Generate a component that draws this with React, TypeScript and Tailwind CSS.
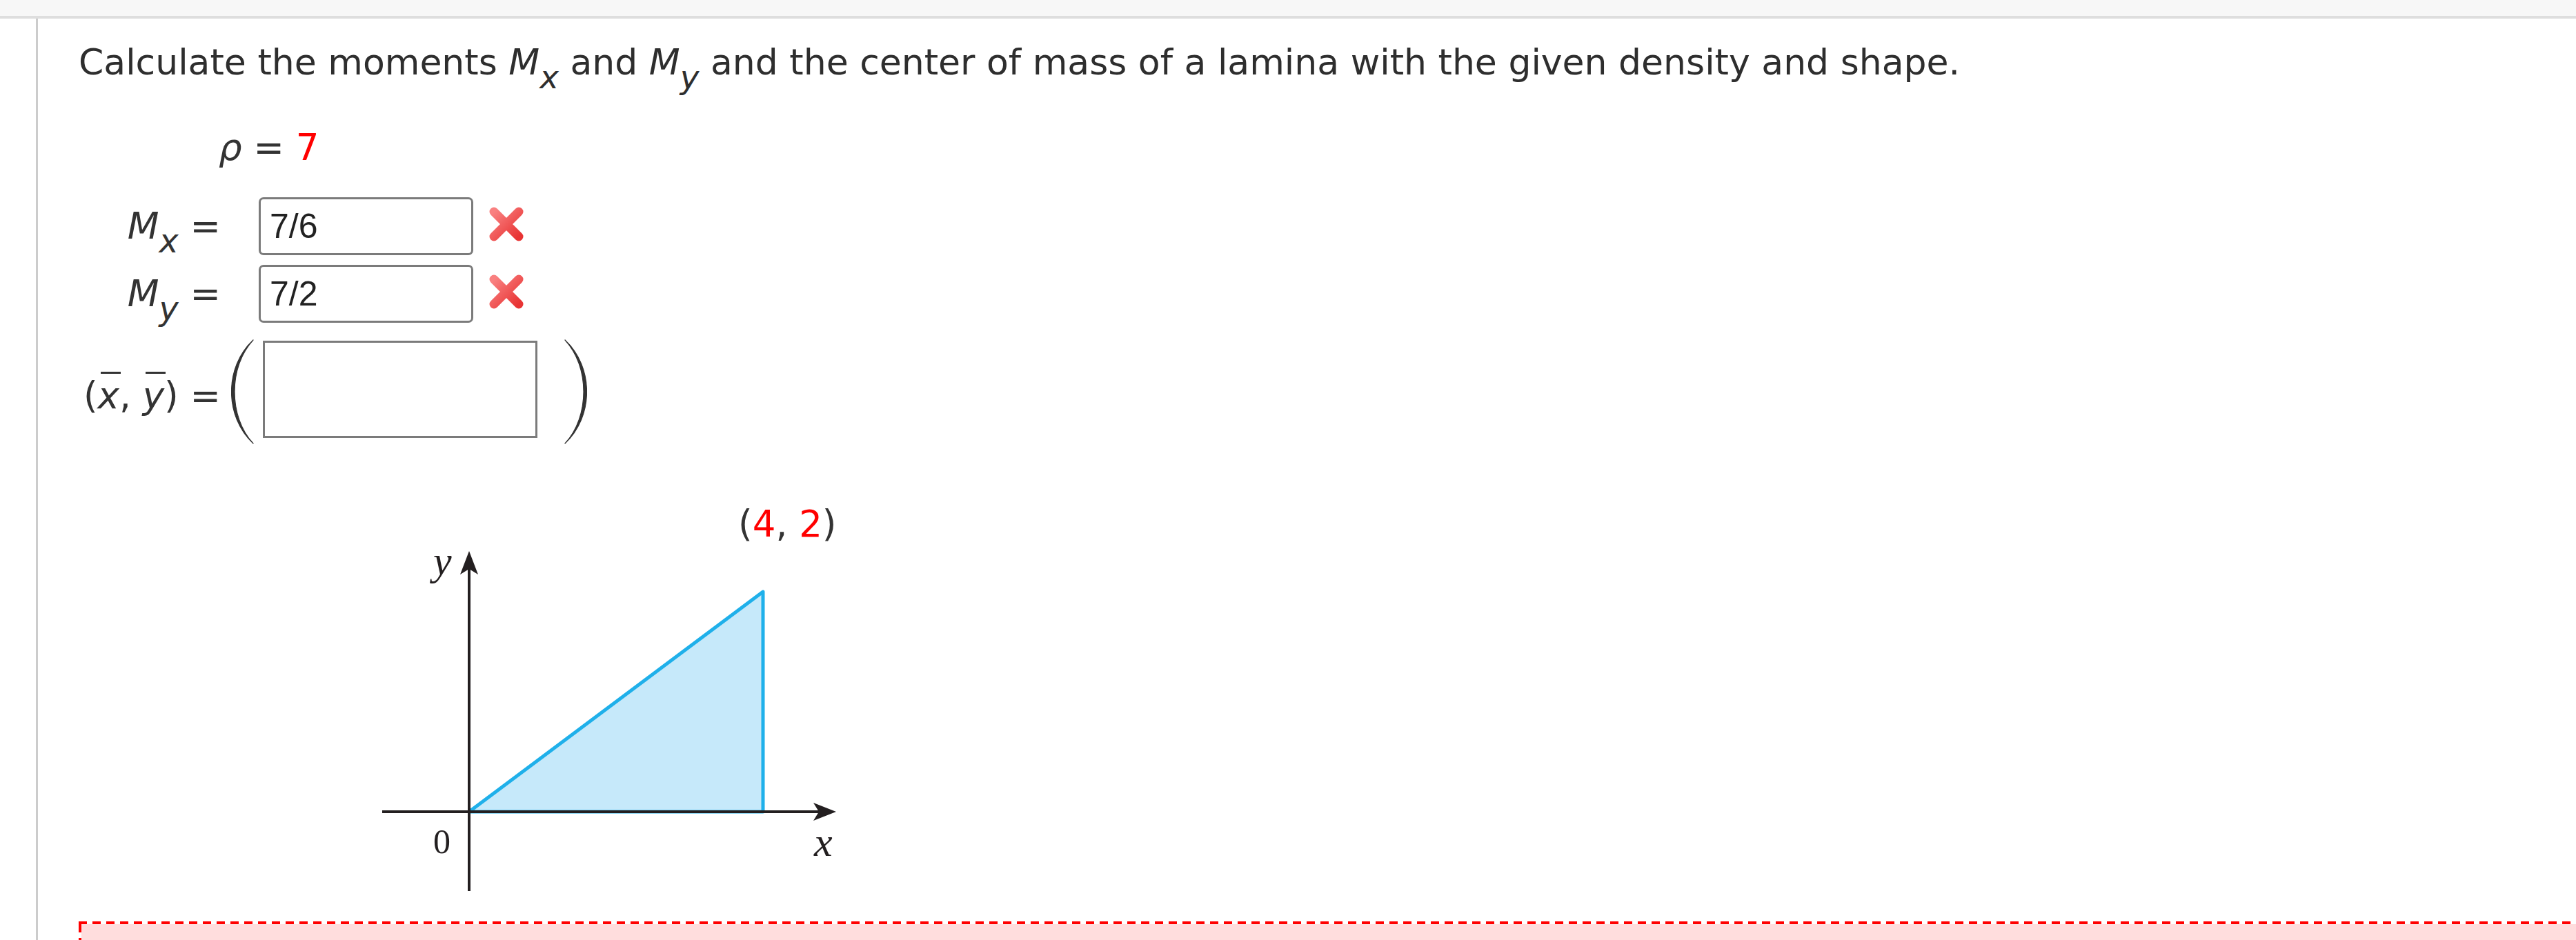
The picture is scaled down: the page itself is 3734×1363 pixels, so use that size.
import React from "react";

function Sub({ children }: { children: React.ReactNode }) {
  return <span className="relative top-[20px] text-[0.9em] italic">{children}</span>;
}

function XMark() {
  return (
    <svg width="54" height="54" viewBox="0 0 54 54" aria-hidden="true" className="ml-[21px] mt-[12px]">
      <defs>
        <linearGradient id="xmark" x1="0" y1="0" x2="1" y2="1">
          <stop offset="0" stopColor="#f98080" />
          <stop offset="1" stopColor="#e83434" />
        </linearGradient>
      </defs>
      <path d="M9 9 L45 45 M45 9 L9 45" stroke="url(#xmark)" strokeWidth="13" strokeLinecap="round" />
    </svg>
  );
}

function Paren({ side }: { side: "left" | "right" }) {
  const d =
    side === "left"
      ? "M32 1 C-10 40 -10 112 32 151 C-4 112 -4 40 32 1 Z"
      : "M2 1 C44 40 44 112 2 151 C38 112 38 40 2 1 Z";
  return (
    <svg width="34" height="152" viewBox="0 0 34 152" aria-hidden="true">
      <path d={d} fill="#333333" stroke="#333333" strokeWidth="1.2" strokeLinejoin="round" />
    </svg>
  );
}

function Bar({ children }: { children: React.ReactNode }) {
  return (
    <span className="relative italic">
      <span className="absolute left-[4px] right-[-2px] top-[-4px] h-[3px] bg-[#333333]" />
      {children}
    </span>
  );
}

function Lamina() {
  return (
    <svg width="700" height="530" viewBox="0 0 700 530" className="-mt-[20px] ml-[426px] block">
      <polygon points="140,405 566,405 566,86" fill="#c6e9fa" stroke="#1fb0ea" strokeWidth="5" strokeLinejoin="round" />
      <line x1="140" y1="44" x2="140" y2="520" stroke="#231f20" strokeWidth="4" />
      <line x1="14" y1="405" x2="655" y2="405" stroke="#231f20" strokeWidth="4" />
      <path d="M140 27 L153 61 L140 53 L127 61 Z" fill="#231f20" />
      <path d="M672 405 L639 392 L647 405 L639 418 Z" fill="#231f20" />
      <text x="88" y="61" fontFamily="Liberation Serif, serif" fontStyle="italic" fontSize="60" fill="#231f20">
        y
      </text>
      <text x="88" y="465" fontFamily="Liberation Serif, serif" fontSize="50" fill="#231f20">
        0
      </text>
      <text x="640" y="469" fontFamily="Liberation Serif, serif" fontStyle="italic" fontSize="60" fill="#231f20">
        x
      </text>
    </svg>
  );
}

const inputCls =
  "h-[84px] w-[311px] rounded-[7px] border-[3px] border-[#7b7b7b] bg-white px-[13px] font-['Liberation_Sans',Arial,sans-serif] text-[50px] text-[#222222] outline-none";

export default function App() {
  return (
    <div className="h-[1363px] w-full overflow-hidden bg-white font-['DejaVu_Sans',Verdana,sans-serif] text-[#333333]">
      <div className="h-[27px] border-b-4 border-[#dedede] bg-[#f7f7f7]" />
      <div className="ml-[52px] h-[1336px] border-l-[3px] border-[#cccccc] pl-[59px] pt-[31px]">
        <p className="whitespace-nowrap text-[52px] leading-[64px] text-[#2e2e2e]">
          Calculate the moments <i>M</i>
          <Sub>x</Sub> and <i>M</i>
          <Sub>y</Sub> and the center of mass of a lamina with the given density and shape.
        </p>

        <div className="ml-[203px] mt-[58px] text-[53px] leading-[64px]">
          <i>ρ</i> = <span className="text-[#ff0000]">7</span>
        </div>

        <div className="mt-[40px] flex h-[84px] items-start">
          <div className="mt-[10px] w-[206px] whitespace-nowrap text-right text-[53px] leading-[64px]">
            <i>M</i>
            <Sub>x</Sub> =
          </div>
          <input readOnly value="7/6" className={`ml-[55px] ${inputCls}`} />
          <XMark />
        </div>

        <div className="mt-[14px] flex h-[85px] items-start">
          <div className="mt-[10px] w-[206px] whitespace-nowrap text-right text-[53px] leading-[64px]">
            <i>M</i>
            <Sub>y</Sub> =
          </div>
          <input readOnly value="7/2" className={`ml-[55px] ${inputCls}`} />
          <XMark />
        </div>

        <div className="mt-[23px] flex h-[152px] items-start">
          <div className="mt-[50px] w-[206px] whitespace-nowrap text-right text-[53px] leading-[64px]">
            (<Bar>x</Bar>, <Bar>y</Bar>) =
          </div>
          <div className="ml-[15px]">
            <Paren side="left" />
          </div>
          <div className="ml-[12px] mt-[2px] h-[141px] w-[398px] border-[3px] border-[#7b7b7b] bg-white" />
          <div className="ml-[38px]">
            <Paren side="right" />
          </div>
        </div>

        <div className="ml-[956px] mt-[84px] whitespace-nowrap text-[53px] leading-[64px]">
          (<span className="text-[#ff0000]">4</span>, <span className="text-[#ff0000]">2</span>)
        </div>

        <Lamina />

        <div className="mt-[34px] flex h-[200px] w-[3700px] flex-col bg-[#ffdddd]">
          <div className="h-[4px] w-full bg-[repeating-linear-gradient(90deg,#ff0000_0_12px,#ffffff_12px_20px)]" />
          <div className="h-full w-[4px] bg-[repeating-linear-gradient(180deg,#ff0000_0_12px,#ffffff_12px_20px)]" />
        </div>
      </div>
    </div>
  );
}
